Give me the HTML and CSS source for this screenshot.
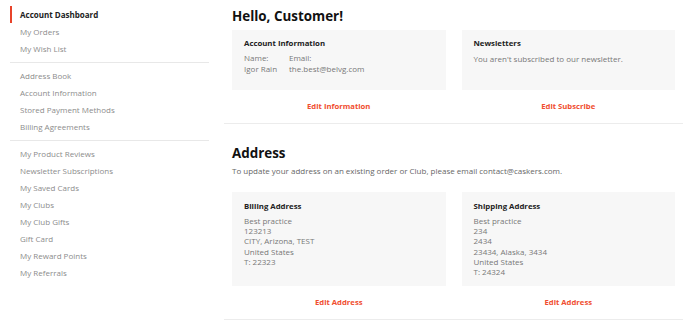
FILE: index.html
```html
<!DOCTYPE html>
<html>
<head>
<meta charset="utf-8">
<link rel="stylesheet" href="styles.css">
</head>
<body>
<div class="page">
  <nav class="sidebar">
    <ul class="nav-group">
      <li class="nav-item active">Account Dashboard</li>
      <li class="nav-item">My Orders</li>
      <li class="nav-item">My Wish List</li>
    </ul>
    <ul class="nav-group">
      <li class="nav-item">Address Book</li>
      <li class="nav-item">Account Information</li>
      <li class="nav-item">Stored Payment Methods</li>
      <li class="nav-item">Billing Agreements</li>
    </ul>
    <ul class="nav-group">
      <li class="nav-item">My Product Reviews</li>
      <li class="nav-item">Newsletter Subscriptions</li>
      <li class="nav-item">My Saved Cards</li>
      <li class="nav-item">My Clubs</li>
      <li class="nav-item">My Club Gifts</li>
      <li class="nav-item">Gift Card</li>
      <li class="nav-item">My Reward Points</li>
      <li class="nav-item">My Referrals</li>
    </ul>
  </nav>
  <main class="main">
    <section class="block block-first">
      <h1 class="heading">Hello, Customer!</h1>
      <div class="cards">
        <div class="col">
          <div class="card card-short">
            <div class="card-title">Account Information</div>
            <div class="info-grid">
              <span>Name:</span><span>Email:</span>
              <span>Igor Rain</span><span>the.best@belvg.com</span>
            </div>
          </div>
          <a class="edit-link">Edit Information</a>
        </div>
        <div class="col">
          <div class="card card-short">
            <div class="card-title">Newsletters</div>
            <p class="card-text">You aren't subscribed to our newsletter.</p>
          </div>
          <a class="edit-link">Edit Subscribe</a>
        </div>
      </div>
    </section>
    <section class="block">
      <h2 class="heading heading-address">Address</h2>
      <p class="subtitle">To update your address on an existing order or Club, please email contact@caskers.com.</p>
      <div class="cards">
        <div class="col">
          <div class="card card-tall">
            <div class="card-title">Billing Address</div>
            <address class="addr">Best practice<br>123213<br>CITY, Arizona, TEST<br>United States<br>T: 22323</address>
          </div>
          <a class="edit-link">Edit Address</a>
        </div>
        <div class="col">
          <div class="card card-tall">
            <div class="card-title">Shipping Address</div>
            <address class="addr">Best practice<br>234<br>2434<br>23434, Alaska, 3434<br>United States<br>T: 24324</address>
          </div>
          <a class="edit-link">Edit Address</a>
        </div>
      </div>
    </section>
  </main>
</div>
</body>
</html>
```
FILE: styles.css
```css
* { box-sizing: border-box; }
body {
  margin: 0;
  background: #fff;
  font-family: "Open Sans", "Liberation Sans", sans-serif;
  color: #777;
  font-size: 8px;
}
.page {
  display: flex;
  padding-left: 10px;
}
.sidebar {
  width: 199px;
  flex: none;
  padding-top: 6px;
}
.nav-group {
  list-style: none;
  margin: 0;
  padding: 0 0 5px 0;
}
.nav-group + .nav-group {
  border-top: 1px solid #e8e8e8;
  padding-top: 4px;
}
.nav-item {
  height: 17px;
  line-height: 17px;
  padding-left: 8px;
  border-left: 2px solid transparent;
  color: #8c8c8c;
  font-size: 8px;
  white-space: nowrap;
}
.nav-item.active {
  border-left-color: #e8432a;
  color: #222;
  font-weight: 700;
}
.main {
  margin-left: 15px;
  width: 459px;
}
.block {
  padding: 0 8px;
  border-bottom: 1px solid #ececec;
}
.heading {
  margin: 0;
  font-size: 13.4px;
  line-height: 20px;
  padding-top: 6px;
  color: #111;
  font-weight: 700;
}
.heading-address {
  padding-top: 19px;
}
.subtitle {
  margin: 1px 0 0;
  line-height: 14px;
  font-size: 8px;
  color: #666;
}
.cards {
  display: flex;
  gap: 16px;
  margin-top: 4px;
}
.block + .block .cards {
  margin-top: 14px;
}
.col {
  flex: 1;
  display: flex;
  flex-direction: column;
}
.card {
  background: #f7f7f7;
  padding: 8px 12px;
}
.card-short { height: 60px; }
.card-tall { height: 94px; padding-top: 9px; }
.card-title {
  color: #222;
  font-weight: 700;
  font-size: 7.8px;
  line-height: 10px;
}
.info-grid {
  display: grid;
  grid-template-columns: 45px auto;
  margin-top: 4px;
  line-height: 11px;
  color: #777;
}
.card-text {
  margin: 5px 0 0;
  line-height: 11px;
}
.addr {
  font-style: normal;
  margin-top: 5px;
  line-height: 10.2px;
  color: #777;
}
.edit-link {
  display: block;
  text-align: center;
  color: #f04e30;
  font-weight: 700;
  font-size: 7.7px;
  line-height: 12px;
  padding: 10px 0 11px;
}
```
